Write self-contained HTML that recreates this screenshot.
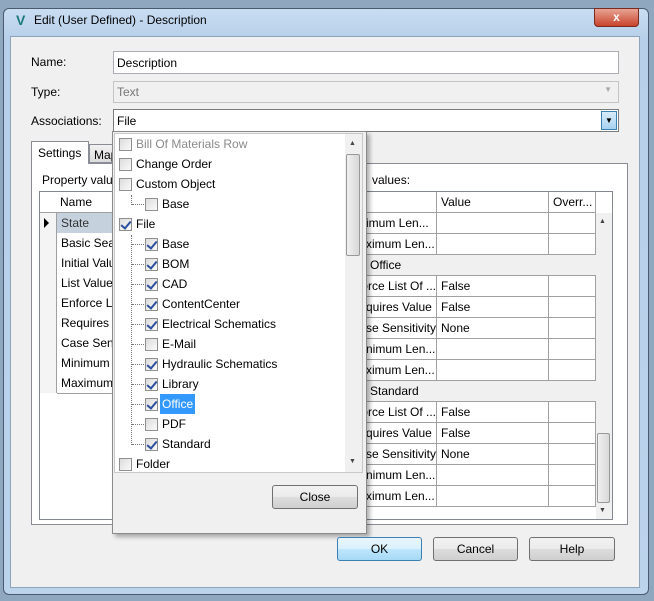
<!DOCTYPE html>
<html><head><meta charset="utf-8"><style>
*{box-sizing:border-box;margin:0;padding:0}
body{width:654px;height:601px;overflow:hidden;background:#8fa8c0;font-family:"Liberation Sans",sans-serif;font-size:12px;color:#000;position:relative}
.a{position:absolute}
.win{left:3px;top:8px;width:646px;height:587px;background:linear-gradient(#c9ddf2,#b7cfe9 30px,#bcd3ec);border:1px solid #4a5a6e;border-radius:6px}
.client{left:10px;top:36px;width:630px;height:552px;background:#f0f0f0;border:1px solid #8ea4bc}
.tb{background:#fff;border:1px solid #abadb3}
.cell{position:absolute;height:21px;line-height:20px;border-right:1px solid #a0a0a0;border-bottom:1px solid #a0a0a0;padding-left:4px;white-space:nowrap;overflow:hidden;background:#fff}
.btn{position:absolute;height:24px;border:1px solid #707070;border-radius:3px;background:linear-gradient(#f2f2f2,#ebebeb 50%,#dddddd 51%,#cfcfcf);text-align:center;line-height:22px}
.cb{position:absolute;width:13px;height:13px;border:1px solid #8f8f8f;background:linear-gradient(135deg,#dcdcdc,#fafafa)}
.ck::after{content:"";position:absolute;left:3px;top:0px;width:4px;height:8px;border-right:2px solid #2a4f9c;border-bottom:2px solid #2a4f9c;transform:rotate(40deg)}
.it{position:absolute;height:20px;line-height:20px;white-space:nowrap}
.dl{position:absolute;border-top:1px dotted #777;width:12px}
</style></head><body>
<div class="a win"></div>
<div class="a" style="left:16px;top:12px;width:12px;height:14px;color:#1b7a7a;font-weight:bold;font-size:14px">V</div>
<div class="a" style="left:34px;top:13px;font-size:12px">Edit (User Defined) - Description</div>
<div class="a" style="left:594px;top:8px;width:45px;height:19px;background:linear-gradient(#e8a493,#c8432c);border:1px solid #7a2a1e;border-radius:0 0 4px 4px;color:#fff;text-align:center;font-weight:bold;line-height:17px">x</div>
<div class="a client"></div>

<div class="a" style="left:31px;top:55px">Name:</div>
<div class="a tb" style="left:113px;top:51px;width:506px;height:23px;padding:4px 3px">Description</div>
<div class="a" style="left:31px;top:85px">Type:</div>
<div class="a tb" style="left:113px;top:81px;width:506px;height:22px;padding:3px 3px;background:#f0f0f0;color:#777;border-color:#c4c4c4">Text<span class="a" style="right:6px;top:3px;color:#aaa;font-size:8px">▼</span></div>
<div class="a" style="left:31px;top:114px">Associations:</div>
<div class="a tb" style="left:113px;top:109px;width:506px;height:23px;padding:4px 3px;border-color:#7a7a7a">File<span class="a" style="right:1px;top:1px;width:16px;height:19px;background:linear-gradient(#d8ecfa,#a8d2f0);border:1px solid #3c7fb1;font-size:8px;text-align:center;line-height:17px">▼</span></div>

<div class="a" style="left:31px;top:163px;width:597px;height:362px;border:1px solid #898c95;background:#fff"></div>
<div class="a" style="left:31px;top:141px;width:58px;height:23px;border:1px solid #898c95;border-bottom:none;background:#fff;padding:4px 6px">Settings</div>
<div class="a" style="left:89px;top:144px;width:40px;height:19px;border:1px solid #898c95;background:linear-gradient(#f2f2f2,#dcdcdc);padding:3px 4px;overflow:hidden">Map</div>
<div class="a" style="left:42px;top:173px">Property values:</div>
<div class="a" style="left:372px;top:173px">values:</div>

<div class="a" style="left:39px;top:191px;width:574px;height:329px;border:1px solid #828790;background:#fff"></div>
<div class="a" style="left:40px;top:192px;width:80px;height:21px;background:#fff;border-bottom:1px solid #a0a0a0"></div>
<div class="a" style="left:60px;top:195px">Name</div>
<div class="a" style="left:40px;top:213px;width:17px;height:180px;background:#f4f4f4;border-right:1px solid #a0a0a0"></div>
<div class="a" style="left:44px;top:218px;width:0;height:0;border-top:5px solid transparent;border-bottom:5px solid transparent;border-left:5px solid #000"></div>
<div class="cell" style="left:57px;top:213px;width:60px;background:#c5d2de;color:#333">State</div>
<div class="cell" style="left:57px;top:233px;width:60px">Basic Search</div>
<div class="cell" style="left:57px;top:253px;width:60px">Initial Value</div>
<div class="cell" style="left:57px;top:273px;width:60px">List Values</div>
<div class="cell" style="left:57px;top:293px;width:60px">Enforce List</div>
<div class="cell" style="left:57px;top:313px;width:60px">Requires Value</div>
<div class="cell" style="left:57px;top:333px;width:60px">Case Sensitivity</div>
<div class="cell" style="left:57px;top:353px;width:60px">Minimum</div>
<div class="cell" style="left:57px;top:373px;width:60px">Maximum</div>

<div class="cell" style="left:366px;top:192px;width:71px">&nbsp;</div>
<div class="cell" style="left:437px;top:192px;width:112px">Value</div>
<div class="cell" style="left:549px;top:192px;width:47px">Overr...</div>
<div id="rg"></div>
<div class="a" style="left:596px;top:213px;width:16px;height:306px;background:#f0f0f0"></div>
<div class="a" style="left:597px;top:433px;width:13px;height:70px;border:1px solid #999;border-radius:2px;background:linear-gradient(90deg,#f0f0f0,#d8d8d8)"></div>
<div class="a" style="left:599px;top:218px;font-size:7px;color:#444">▲</div>
<div class="a" style="left:599px;top:507px;font-size:7px;color:#444">▼</div>

<div class="a" style="left:112px;top:131px;width:255px;height:403px;background:#f0f0f0;border:1px solid #8a8a8a;box-shadow:3px 3px 4px rgba(0,0,0,.3)"></div>
<div class="a" style="left:114px;top:133px;width:249px;height:340px;background:#fff;border:1px solid #c8c8c8"></div>
<div class="a" style="left:345px;top:134px;width:17px;height:338px;background:#f0f0f0"></div>
<div class="a" style="left:346px;top:154px;width:14px;height:102px;border:1px solid #999;border-radius:2px;background:linear-gradient(90deg,#f0f0f0,#d8d8d8)"></div>
<div class="a" style="left:349px;top:140px;font-size:7px;color:#444">▲</div>
<div class="a" style="left:349px;top:458px;font-size:7px;color:#444">▼</div>
<div class="btn" style="left:272px;top:485px;width:86px">Close</div>
<div id="pl"></div>

<div class="btn" style="left:337px;top:537px;width:85px;border-color:#3c7fb1;background:linear-gradient(#eaf6fd,#d9f0fc 50%,#bee6fd 51%,#a7d9f5)">OK</div>
<div class="btn" style="left:433px;top:537px;width:85px">Cancel</div>
<div class="btn" style="left:529px;top:537px;width:86px">Help</div>

<script>
var rg=document.getElementById('rg'),h='';
var rows=[["imum Len...",""],["ximum Len...",""],["G","Office"],["force List Of ...","False"],["quires Value","False"],["se Sensitivity","None"],["nimum Len...",""],["ximum Len...",""],["G","Standard"],["force List Of ...","False"],["quires Value","False"],["se Sensitivity","None"],["nimum Len...",""],["ximum Len...",""]];
rows.forEach(function(r,i){var y=213+i*21;
if(r[0]=="G"){h+='<div class="cell" style="left:366px;top:'+y+'px;width:230px;background:#f0f0f0;border-right:none">'+r[1]+'</div>';}
else{h+='<div class="cell" style="left:366px;top:'+y+'px;width:71px;padding-left:0;direction:rtl;text-align:left"><span style="direction:ltr;unicode-bidi:embed">'+r[0]+'</span></div><div class="cell" style="left:437px;top:'+y+'px;width:112px">'+r[1]+'</div><div class="cell" style="left:549px;top:'+y+'px;width:47px"></div>';}
});rg.innerHTML=h;
var items=[[0,0,"Bill Of Materials Row",1],[0,0,"Change Order"],[0,0,"Custom Object"],[1,0,"Base"],[0,1,"File"],[1,1,"Base"],[1,1,"BOM"],[1,1,"CAD"],[1,1,"ContentCenter"],[1,1,"Electrical Schematics"],[1,0,"E-Mail"],[1,1,"Hydraulic Schematics"],[1,1,"Library"],[1,1,"Office",0,1],[1,0,"PDF"],[1,1,"Standard"],[0,0,"Folder"]];
h='';
items.forEach(function(t,i){var y=134+i*20;var x=t[0]?145:119;
if(t[0]){h+='<div class="dl" style="left:132px;top:'+(y+10)+'px"></div>';}
h+='<div class="cb'+(t[1]?' ck':'')+'" style="left:'+x+'px;top:'+(y+4)+'px"></div>';
h+='<div class="it" style="left:'+(x+15)+'px;top:'+y+'px;padding:0 2px;'+(t[3]?'color:#8a8a8a;':'')+(t[4]?'background:#3399ff;color:#fff;':'')+'">'+t[2]+'</div>';});
h+='<div class="a" style="left:131px;top:195px;height:10px;border-left:1px dotted #777"></div>';
h+='<div class="a" style="left:131px;top:235px;height:210px;border-left:1px dotted #777"></div>';
document.getElementById('pl').innerHTML=h;
</script>
</body></html>
